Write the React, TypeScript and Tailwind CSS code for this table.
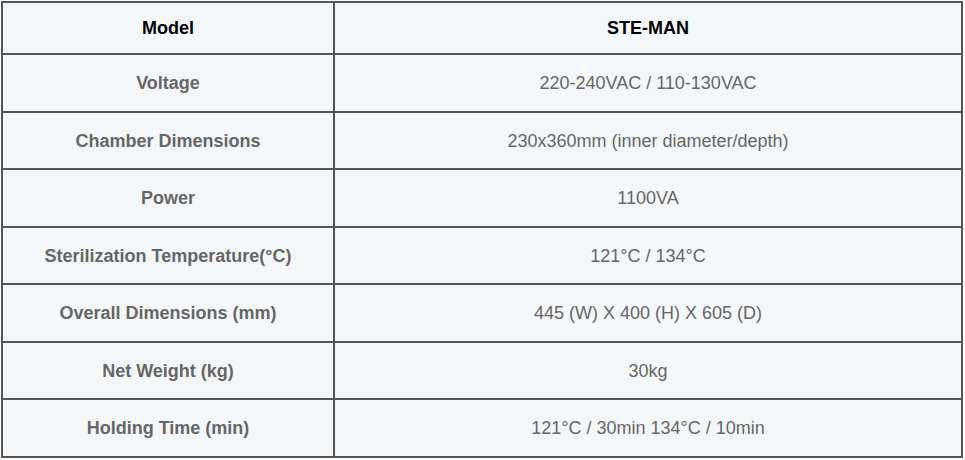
import React from 'react';

const rows: [string, string][] = [
  ['Voltage', '220-240VAC / 110-130VAC'],
  ['Chamber Dimensions', '230x360mm (inner diameter/depth)'],
  ['Power', '1100VA'],
  ['Sterilization Temperature(°C)', '121°C / 134°C'],
  ['Overall Dimensions (mm)', '445 (W) X 400 (H) X 605 (D)'],
  ['Net Weight (kg)', '30kg'],
  ['Holding Time (min)', '121°C / 30min 134°C / 10min'],
];

const App = () => {
  return (
    <div className="min-h-screen bg-white pt-px pl-px" style={{ fontFamily: '"Liberation Sans", Arial, sans-serif' }}>
      <table className="w-[962px] border-collapse bg-[#f4f7f9] border-2 border-[#555]">
        <thead>
          <tr className="h-[52px]">
            <th className="w-[332px] border-2 border-[#555] pt-px text-[18px] font-bold text-black">Model</th>
            <th className="border-2 border-[#555] pt-px text-[18px] font-bold text-black">STE-MAN</th>
          </tr>
        </thead>
        <tbody>
          {rows.map(([label, value], i) => (
            <tr key={i} className="h-[57.5px]">
              <td className="border-2 border-[#555] pt-0.5 text-center text-[18px] font-bold text-[#666]">{label}</td>
              <td className="border-2 border-[#555] pt-0.5 text-center text-[18px] text-[#666]">{value}</td>
            </tr>
          ))}
        </tbody>
      </table>
    </div>
  );
};

export default App;
